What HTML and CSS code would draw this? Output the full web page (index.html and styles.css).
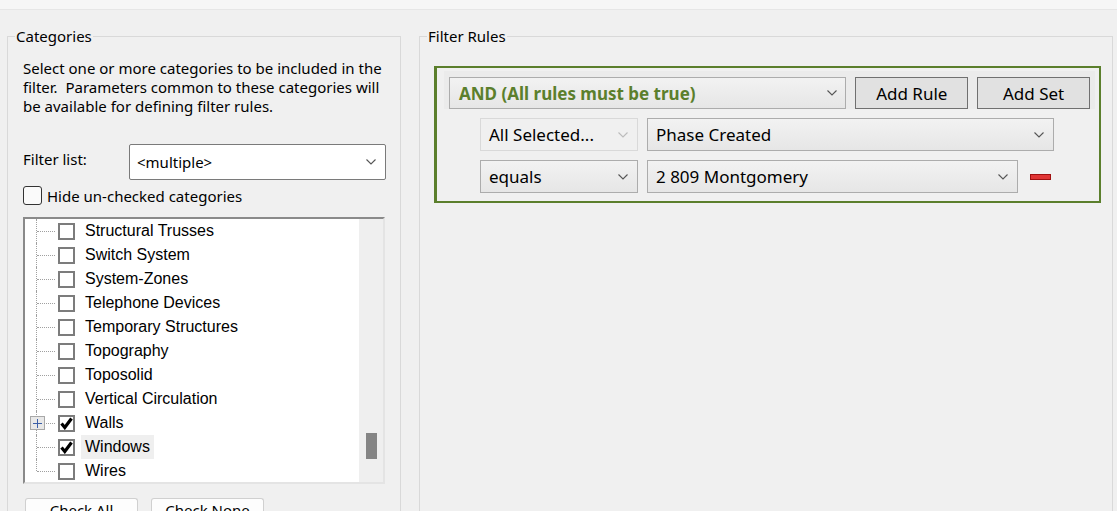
FILE: index.html
```html
<!DOCTYPE html>
<html lang="en">
<head>
    <meta charset="UTF-8">
    <title>Filters</title>
    <link rel="stylesheet" href="styles.css">
</head>
<body>
    <div class="topbar"></div>

    <div class="panels">
        <fieldset class="group categories">
            <legend>Categories</legend>
            <p class="hint">Select one or more categories to be included in the filter.&nbsp; Parameters common to these categories will be available for defining filter rules.</p>

            <div class="filter-row">
                <span class="filter-label">Filter list:</span>
                <div class="combo combo-white">
                    <span>&lt;multiple&gt;</span>
                    <svg class="chev" width="10" height="6" viewBox="0 0 10 6"><path d="M0.5 0.5 L5 5 L9.5 0.5" fill="none" stroke="#555" stroke-width="1.1"/></svg>
                </div>
            </div>

            <label class="hide-check"><span class="round-box"></span>Hide un-checked categories</label>

            <div class="tree">
                <ul class="tree-list">
                    <li><span class="cb"></span><span class="name">Structural Trusses</span></li>
                    <li><span class="cb"></span><span class="name">Switch System</span></li>
                    <li><span class="cb"></span><span class="name">System-Zones</span></li>
                    <li><span class="cb"></span><span class="name">Telephone Devices</span></li>
                    <li><span class="cb"></span><span class="name">Temporary Structures</span></li>
                    <li><span class="cb"></span><span class="name">Topography</span></li>
                    <li><span class="cb"></span><span class="name">Toposolid</span></li>
                    <li><span class="cb"></span><span class="name">Vertical Circulation</span></li>
                    <li>
                        <span class="expander"><svg width="9" height="9" viewBox="0 0 9 9"><path d="M0 4.5 H9 M4.5 0 V9" stroke="#3b5fa8" stroke-width="1"/></svg></span>
                        <span class="cb checked"><svg width="13" height="13" viewBox="0 0 13 13"><path d="M1.5 6.5 L4.8 10.5 L11.5 1.5" fill="none" stroke="#000" stroke-width="3.2" stroke-linejoin="miter"/></svg></span>
                        <span class="name">Walls</span>
                    </li>
                    <li>
                        <span class="cb checked"><svg width="13" height="13" viewBox="0 0 13 13"><path d="M1.5 6.5 L4.8 10.5 L11.5 1.5" fill="none" stroke="#000" stroke-width="3.2" stroke-linejoin="miter"/></svg></span>
                        <span class="name selected">Windows</span>
                    </li>
                    <li><span class="cb"></span><span class="name">Wires</span></li>
                </ul>
                <div class="scroll"><div class="thumb"></div></div>
            </div>

            <div class="check-buttons">
                <button class="soft-btn">Check All</button>
                <button class="soft-btn">Check None</button>
            </div>
        </fieldset>

        <fieldset class="group rules">
            <legend>Filter Rules</legend>
            <div class="rule-set">
                <div class="set-head">
                    <div class="combo combo-and">
                        <span>AND (All rules must be true)</span>
                        <svg class="chev" width="10" height="6" viewBox="0 0 10 6"><path d="M0.5 0.5 L5 5 L9.5 0.5" fill="none" stroke="#555" stroke-width="1.1"/></svg>
                    </div>
                    <button class="flat-btn">Add Rule</button>
                    <button class="flat-btn">Add Set</button>
                </div>
                <div class="rule-row">
                    <div class="combo combo-op disabled">
                        <span>All Selected...</span>
                        <svg class="chev" width="10" height="6" viewBox="0 0 10 6"><path d="M0.5 0.5 L5 5 L9.5 0.5" fill="none" stroke="#bbb" stroke-width="1.1"/></svg>
                    </div>
                    <div class="combo combo-param">
                        <span>Phase Created</span>
                        <svg class="chev" width="10" height="6" viewBox="0 0 10 6"><path d="M0.5 0.5 L5 5 L9.5 0.5" fill="none" stroke="#555" stroke-width="1.1"/></svg>
                    </div>
                </div>
                <div class="rule-row">
                    <div class="combo combo-op">
                        <span>equals</span>
                        <svg class="chev" width="10" height="6" viewBox="0 0 10 6"><path d="M0.5 0.5 L5 5 L9.5 0.5" fill="none" stroke="#555" stroke-width="1.1"/></svg>
                    </div>
                    <div class="combo combo-value">
                        <span>2 809 Montgomery</span>
                        <svg class="chev" width="10" height="6" viewBox="0 0 10 6"><path d="M0.5 0.5 L5 5 L9.5 0.5" fill="none" stroke="#555" stroke-width="1.1"/></svg>
                    </div>
                    <span class="remove"></span>
                </div>
            </div>
        </fieldset>
    </div>
</body>
</html>
```

FILE: styles.css
```css
html, body {
    height: 511px;
    overflow: hidden;
}
body {
    margin: 0;
    background-color: #f0f0f0;
    font-family: "Noto Sans", sans-serif;
    font-size: 15px;
    color: #000;
}
.topbar {
    height: 9px;
    background-color: #f6f6f6;
    border-bottom: 1px solid #e6e6e6;
}
.panels {
    display: flex;
    gap: 18px;
    padding-left: 7px;
    margin-top: 16px;
}
.group {
    margin: 0;
    border: 1px solid #d9d9d9;
    border-bottom: none;
    height: 520px;
    box-sizing: border-box;
}
.group legend {
    padding: 0 1px;
    font-size: 15px;
    line-height: 20px;
}
.categories {
    width: 394px;
    padding: 8px 14px 0 15px;
}
.categories legend {
    margin-left: -8px;
}
.rules {
    width: 694px;
    padding: 20px 11px 0 14px;
}
.rules legend {
    margin-left: -7px;
}

/* categories */
.hint {
    margin: 0;
    line-height: 19px;
    padding-top: 5px;
}
.filter-row {
    display: flex;
    align-items: center;
    margin-top: 28px;
}
.filter-label {
    width: 106px;
    padding-bottom: 6px;
}
.combo {
    display: flex;
    align-items: center;
    justify-content: space-between;
    box-sizing: border-box;
    border: 1px solid #acacac;
    background: linear-gradient(#f2f2f2, #e6e6e6);
}
.combo-white {
    width: 257px;
    height: 36px;
    background: #fff;
    border-color: #7a7a7a;
    padding: 0 9px 0 7px;
    border-radius: 2px;
}
.hide-check {
    display: flex;
    align-items: center;
    gap: 5px;
    margin-top: 6px;
    height: 19px;
}
.round-box {
    width: 19px;
    height: 19px;
    box-sizing: border-box;
    border: 1px solid #333;
    border-radius: 3px;
    background: #fafafa;
}
.tree {
    display: flex;
    width: 362px;
    height: 267px;
    margin-top: 12px;
    box-sizing: border-box;
    border-top: 2px solid #8a8a8a;
    border-left: 2px solid #8a8a8a;
    border-right: 2px solid #e4e4e4;
    border-bottom: 2px solid #e4e4e4;
}
.tree-list {
    list-style: none;
    margin: 0;
    padding: 0;
    width: 334px;
    background: #fff;
    font-family: "Liberation Sans", Arial, sans-serif;
    font-size: 16px;
}
.tree-list li {
    position: relative;
    display: flex;
    align-items: center;
    height: 24px;
    padding-left: 33px;
}
.tree-list li::before {
    content: "";
    position: absolute;
    left: 11px;
    top: 0;
    height: 100%;
    border-left: 1px dotted #a0a0a0;
}
.tree-list li:last-child::before {
    height: 12px;
}
.tree-list li::after {
    content: "";
    position: absolute;
    left: 12px;
    top: 12px;
    width: 18px;
    border-top: 1px dotted #a0a0a0;
}
.cb {
    display: flex;
    align-items: center;
    justify-content: center;
    width: 17px;
    height: 17px;
    box-sizing: border-box;
    border: 2px solid #7c7c7c;
    background: #fff;
    position: relative;
    z-index: 1;
}
.name {
    margin-left: 6px;
    padding: 0 4px;
    line-height: 24px;
}
.name.selected {
    background: #efefef;
}
.expander {
    position: absolute;
    left: 5px;
    top: 5px;
    width: 15px;
    height: 14px;
    box-sizing: border-box;
    border: 1px solid #a8a8a8;
    background: #e8e8e8;
    display: flex;
    align-items: center;
    justify-content: center;
    z-index: 2;
}
.scroll {
    flex: 1;
    background: #efefef;
    position: relative;
}
.thumb {
    position: absolute;
    left: 7px;
    top: 214px;
    width: 11px;
    height: 26px;
    background: #858585;
}
.check-buttons {
    display: flex;
    gap: 13px;
    margin-top: 14px;
    padding-left: 2px;
}
.soft-btn {
    width: 113px;
    height: 22px;
    font-family: "Noto Sans", sans-serif;
    font-size: 15px;
    line-height: 22px;
    background: #fdfdfd;
    border: 1px solid #d0d0d0;
    border-bottom: none;
    border-radius: 3px 3px 0 0;
    padding: 0;
}

/* rules */
.rule-set {
    width: 667px;
    height: 137px;
    box-sizing: border-box;
    border: 2px solid #5b7f2c;
    border-left-width: 3px;
    padding-top: 3px;
}
.set-head {
    display: flex;
    gap: 9px;
    margin: 0 4px 0 7px;
    padding: 6px 5px 0;
    background: #ebebeb;
    font-size: 17px;
}
.combo-and {
    width: 398px;
    height: 32px;
    padding: 0 8px 0 9px;
    color: #5b7f2c;
    font-weight: bold;
}
.flat-btn {
    width: 113px;
    height: 32px;
    font-family: "Noto Sans", sans-serif;
    font-size: 17px;
    background: #e1e1e1;
    border: 1px solid #707070;
    padding: 0;
}
.rule-row {
    display: flex;
    align-items: center;
    gap: 9px;
    margin-left: 43px;
    margin-top: 9px;
    font-size: 17px;
}
.rule-row .combo {
    height: 33px;
    padding: 0 9px 0 8px;
}
.combo-op {
    width: 158px;
}
.combo-op.disabled {
    background: #f0f0f0;
    border-color: #d9d9d9;
}
.combo-param {
    width: 407px;
}
.combo-value {
    width: 371px;
}
.remove {
    width: 21px;
    height: 6px;
    margin-left: 3px;
    box-sizing: border-box;
    border: 1px solid #a01010;
    background: #e03535;
}
```
